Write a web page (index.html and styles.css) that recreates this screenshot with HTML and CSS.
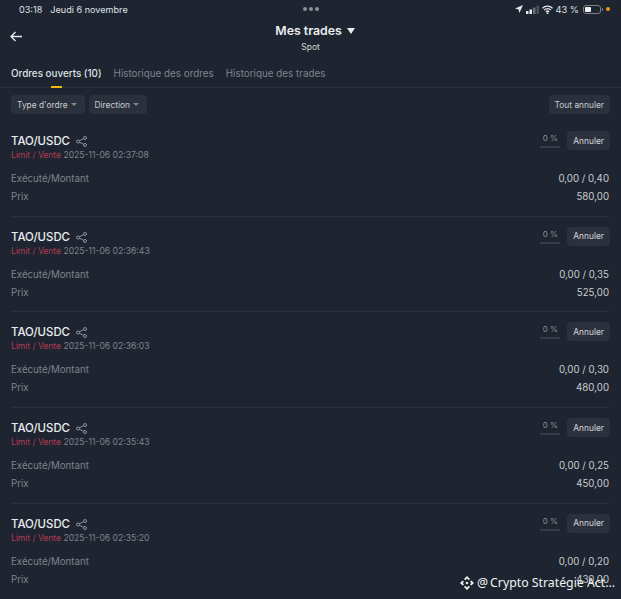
FILE: index.html
```html
<!DOCTYPE html>
<html lang="fr">
<head>
    <meta charset="UTF-8">
    <meta name="viewport" content="width=device-width, initial-scale=1.0">
    <title>Mes trades</title>
    <link rel="stylesheet" href="styles.css">
</head>

<body>
    <div class="status-bar">
        <div class="status-left"><span>03:18</span><span>Jeudi 6 novembre</span></div>
        <div class="status-dots"><i></i><i></i><i></i></div>
        <div class="status-right">
            <svg width="8" height="8" viewBox="0 0 9 9"><path d="M9 0 0 4l4 1 1 4z" fill="#e6e8ea"/></svg>
            <svg width="13" height="9" viewBox="0 0 13 9"><rect x="0" y="6" width="2.5" height="3" fill="#e6e8ea"/><rect x="3.5" y="4.5" width="2.5" height="4.5" fill="#e6e8ea"/><rect x="7" y="2.5" width="2.5" height="6.5" fill="#6b7078"/><rect x="10.5" y="0.5" width="2.5" height="8.5" fill="#4b515a"/></svg>
            <svg width="11" height="9" viewBox="0 0 11 9" fill="none" stroke="#e6e8ea" stroke-width="1.3"><path d="M.5 3.2a7 7 0 0 1 10 0M2.2 5a4.6 4.6 0 0 1 6.6 0M3.9 6.7a2.2 2.2 0 0 1 3.2 0"/><circle cx="5.5" cy="8.2" r=".4"/></svg>
            <span class="battery-text">43 %</span>
            <span class="battery"><b></b></span>
            <span class="battery-tip"></span>
            <span class="orange-dot"></span>
        </div>
    </div>

    <header class="top-bar">
        <svg class="back" width="13" height="11" viewBox="0 0 13 11" fill="none" stroke="#eaecef" stroke-width="1.3"><path d="M12 5.5H1M5.5 1 1 5.5 5.5 10"/></svg>
        <div class="title"><span>Mes trades</span><span class="title-caret"></span></div>
        <div class="subtitle">Spot</div>
    </header>

    <nav class="tabs">
        <a class="tab active">Ordres ouverts (10)</a>
        <a class="tab">Historique des ordres</a>
        <a class="tab">Historique des trades</a>
    </nav>

    <div class="filters">
        <button class="pill">Type d'ordre<span class="caret"></span></button>
        <button class="pill">Direction<span class="caret"></span></button>
        <button class="pill cancel-all">Tout annuler</button>
    </div>

    <main id="orders">
        <section class="order">
            <div class="order-head">
                <div>
                    <div class="pair">TAO/USDC
                        <svg width="11" height="11" viewBox="0 0 11 11" fill="none" stroke="#9a9fa7" stroke-width=".9"><circle cx="2" cy="5.5" r="1.5"/><circle cx="9" cy="2" r="1.5"/><circle cx="9" cy="9" r="1.5"/><path d="M3.4 4.8 7.6 2.7M3.4 6.2l4.2 2.1"/></svg>
                    </div>
                    <div class="meta"><span class="side">Limit / Vente</span> 2025-11-06 02:37:08</div>
                </div>
                <div class="order-actions">
                    <div class="progress">0 %</div>
                    <button class="pill cancel">Annuler</button>
                </div>
            </div>
            <div class="row"><span>Exécuté/Montant</span><span class="value">0,00 / 0,40</span></div>
            <div class="row"><span>Prix</span><span class="value">580,00</span></div>
        </section>

        <section class="order">
            <div class="order-head">
                <div>
                    <div class="pair">TAO/USDC
                        <svg width="11" height="11" viewBox="0 0 11 11" fill="none" stroke="#9a9fa7" stroke-width=".9"><circle cx="2" cy="5.5" r="1.5"/><circle cx="9" cy="2" r="1.5"/><circle cx="9" cy="9" r="1.5"/><path d="M3.4 4.8 7.6 2.7M3.4 6.2l4.2 2.1"/></svg>
                    </div>
                    <div class="meta"><span class="side">Limit / Vente</span> 2025-11-06 02:36:43</div>
                </div>
                <div class="order-actions">
                    <div class="progress">0 %</div>
                    <button class="pill cancel">Annuler</button>
                </div>
            </div>
            <div class="row"><span>Exécuté/Montant</span><span class="value">0,00 / 0,35</span></div>
            <div class="row"><span>Prix</span><span class="value">525,00</span></div>
        </section>

        <section class="order">
            <div class="order-head">
                <div>
                    <div class="pair">TAO/USDC
                        <svg width="11" height="11" viewBox="0 0 11 11" fill="none" stroke="#9a9fa7" stroke-width=".9"><circle cx="2" cy="5.5" r="1.5"/><circle cx="9" cy="2" r="1.5"/><circle cx="9" cy="9" r="1.5"/><path d="M3.4 4.8 7.6 2.7M3.4 6.2l4.2 2.1"/></svg>
                    </div>
                    <div class="meta"><span class="side">Limit / Vente</span> 2025-11-06 02:36:03</div>
                </div>
                <div class="order-actions">
                    <div class="progress">0 %</div>
                    <button class="pill cancel">Annuler</button>
                </div>
            </div>
            <div class="row"><span>Exécuté/Montant</span><span class="value">0,00 / 0,30</span></div>
            <div class="row"><span>Prix</span><span class="value">480,00</span></div>
        </section>

        <section class="order">
            <div class="order-head">
                <div>
                    <div class="pair">TAO/USDC
                        <svg width="11" height="11" viewBox="0 0 11 11" fill="none" stroke="#9a9fa7" stroke-width=".9"><circle cx="2" cy="5.5" r="1.5"/><circle cx="9" cy="2" r="1.5"/><circle cx="9" cy="9" r="1.5"/><path d="M3.4 4.8 7.6 2.7M3.4 6.2l4.2 2.1"/></svg>
                    </div>
                    <div class="meta"><span class="side">Limit / Vente</span> 2025-11-06 02:35:43</div>
                </div>
                <div class="order-actions">
                    <div class="progress">0 %</div>
                    <button class="pill cancel">Annuler</button>
                </div>
            </div>
            <div class="row"><span>Exécuté/Montant</span><span class="value">0,00 / 0,25</span></div>
            <div class="row"><span>Prix</span><span class="value">450,00</span></div>
        </section>

        <section class="order">
            <div class="order-head">
                <div>
                    <div class="pair">TAO/USDC
                        <svg width="11" height="11" viewBox="0 0 11 11" fill="none" stroke="#9a9fa7" stroke-width=".9"><circle cx="2" cy="5.5" r="1.5"/><circle cx="9" cy="2" r="1.5"/><circle cx="9" cy="9" r="1.5"/><path d="M3.4 4.8 7.6 2.7M3.4 6.2l4.2 2.1"/></svg>
                    </div>
                    <div class="meta"><span class="side">Limit / Vente</span> 2025-11-06 02:35:20</div>
                </div>
                <div class="order-actions">
                    <div class="progress">0 %</div>
                    <button class="pill cancel">Annuler</button>
                </div>
            </div>
            <div class="row"><span>Exécuté/Montant</span><span class="value">0,00 / 0,20</span></div>
            <div class="row"><span>Prix</span><span class="value">430,00</span></div>
        </section>
    </main>

    <div class="watermark">
        <svg width="14" height="14" viewBox="0 0 14 14" fill="#f2f2f2"><path d="M7 0 10 3 8.8 4.2 7 2.4 5.2 4.2 4 3zM2.7 4.4 4 5.700 2.7 7 4 8.300 2.7 9.6 0 7zM11.3 4.4 14 7l-2.7 2.6L10 8.300 11.3 7 10 5.700zM7 5.400 8.600 7 7 8.600 5.400 7zM4 11l1.200-1.200L7 11.600l1.800-1.800L10 11l-3 3z"/></svg>
        <span class="watermark-at">@</span><span>Crypto Stratégie Act...</span>
    </div>
</body>

</html>
```

FILE: styles.css
```css
* {
    box-sizing: border-box;
}

html,
body {
    height: 100%;
}

body {
    margin: 0;
    background-color: #1e2530;
    color: #eaecef;
    font-family: Inter, "Liberation Sans", sans-serif;
    overflow: hidden;
    position: relative;
}

/* Status bar */
.status-bar {
    height: 18px;
    padding: 0 11px 0 19px;
    display: flex;
    justify-content: space-between;
    align-items: center;
    font-size: 9.3px;
    color: #dfe1e4;
    position: relative;
}

.status-left {
    display: flex;
    gap: 8px;
    font-size: 9.1px;
}

.status-dots {
    position: absolute;
    left: 303px;
    top: 7px;
    display: flex;
    gap: 2px;
}

.status-dots i {
    width: 4px;
    height: 4px;
    border-radius: 50%;
    background-color: #8b9097;
}

.status-right {
    display: flex;
    align-items: center;
    gap: 3px;
}

.battery-text {
    margin-right: 1px;
}

.battery {
    width: 18px;
    height: 9px;
    border: 1px solid #7d8289;
    border-radius: 3px;
    padding: 1px;
}

.battery b {
    display: block;
    width: 6px;
    height: 100%;
    background-color: #f0f0f0;
    border-radius: 1px;
}

.battery-tip {
    width: 1px;
    height: 3px;
    background-color: #7d8289;
    margin-left: -2px;
}

.orange-dot {
    width: 4px;
    height: 4px;
    border-radius: 50%;
    background-color: #f7931a;
}

/* Header */
.top-bar {
    height: 40px;
    text-align: center;
    position: relative;
    padding-top: 4px;
}

.back {
    position: absolute;
    left: 10px;
    top: 13px;
}

.title {
    font-size: 12.3px;
    font-weight: 600;
    line-height: 17px;
    display: flex;
    justify-content: center;
    align-items: center;
    gap: 5px;
    padding-left: 9px;
}

.title-caret {
    width: 0;
    height: 0;
    border-left: 4.5px solid transparent;
    border-right: 4.5px solid transparent;
    border-top: 6px solid #eaecef;
}

.subtitle {
    font-size: 8.5px;
    color: #d5d7da;
    line-height: 12px;
    margin-top: 2px;
}

/* Tabs */
.tabs {
    height: 30px;
    padding: 0 11px;
    display: flex;
    gap: 12px;
    border-bottom: 1px solid #2a313c;
    font-size: 9.85px;
    line-height: 31px;
    color: #7e838b;
}

.tab {
    position: relative;
}

.tab.active {
    color: #dfe1e4;
    font-weight: 500;
}

.tab.active::after {
    content: "";
    position: absolute;
    left: 40px;
    bottom: -0.5px;
    width: 11px;
    height: 1.5px;
    background-color: #f0b90b;
}

/* Filters */
.filters {
    display: flex;
    gap: 4px;
    padding: 7px 11px 0;
    height: 33px;
}

.pill {
    height: 19px;
    padding: 0 6px;
    border: none;
    border-radius: 4px;
    background-color: #2b313c;
    color: #c9ccd1;
    font-family: inherit;
    font-size: 8.4px;
    display: flex;
    align-items: center;
}

.caret {
    width: 0;
    height: 0;
    margin: 0 2px 0 3px;
    border-left: 3px solid transparent;
    border-right: 3px solid transparent;
    border-top: 3px solid #7e838b;
}

.cancel-all {
    margin-left: auto;
}

/* Orders */
.order {
    height: 95.7px;
    margin: 0 11px;
    padding-top: 12px;
    border-bottom: 1px solid #2a313c;
}

.order:last-child {
    border-bottom: none;
}

.order-head {
    display: flex;
    justify-content: space-between;
    height: 37px;
}

.pair {
    font-size: 11.4px;
    font-weight: 500;
    line-height: 17px;
    color: #eaecef;
    display: flex;
    align-items: center;
    gap: 6px;
}

.meta {
    font-size: 8.6px;
    line-height: 11px;
    color: #7e838b;
}

.side {
    color: #b23a55;
    letter-spacing: -0.05px;
}

.order-actions {
    display: flex;
    gap: 7px;
    align-items: flex-start;
    margin-top: -2px;
}

.progress {
    width: 20px;
    height: 17px;
    font-size: 8px;
    line-height: 14px;
    text-align: center;
    color: #8b9097;
    border-bottom: 2px solid #363c47;
}

.cancel {
    padding: 0 6px;
    color: #d5d7da;
}

.row {
    display: flex;
    justify-content: space-between;
    font-size: 9.7px;
    line-height: 18px;
    color: #7e838b;
}

.value {
    color: #c9ccd1;
    margin-right: 1px;
}

/* Watermark over the last row */
.watermark {
    position: absolute;
    left: 460px;
    top: 574px;
    display: flex;
    align-items: center;
    font-family: "Noto Sans", sans-serif;
    font-size: 12.3px;
    color: #f2f2f2;
    white-space: nowrap;
}

.watermark-at {
    margin: 0 2px 0 3px;
}
```
